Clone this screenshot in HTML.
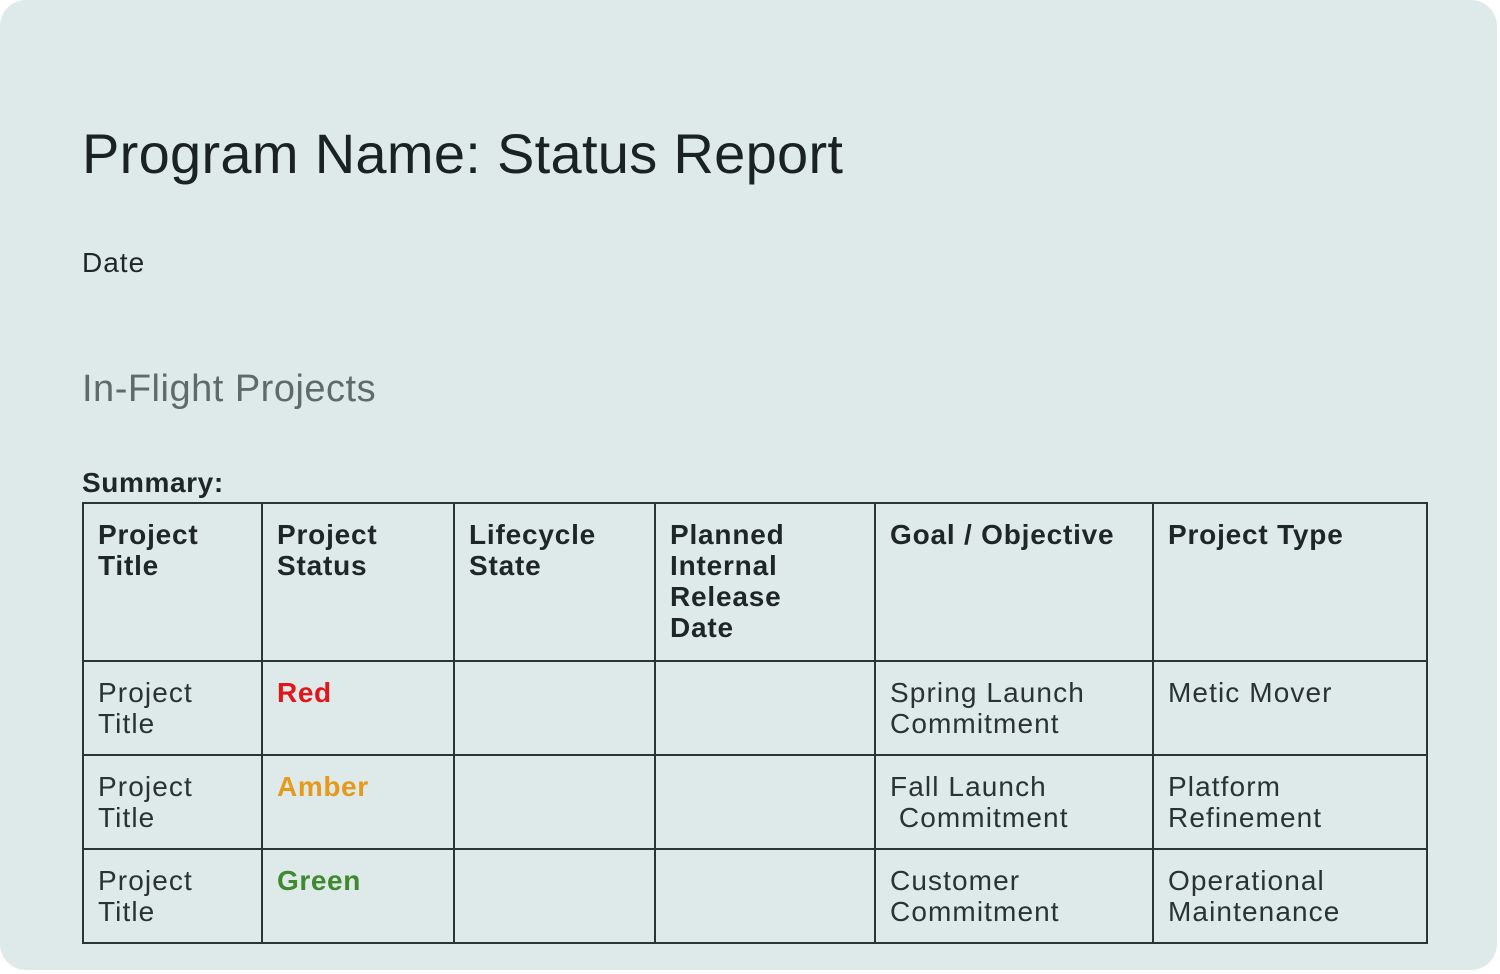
<!DOCTYPE html>
<html><head><style>
html,body{margin:0;padding:0;background:#fff;}
body{width:1500px;height:974px;position:relative;overflow:hidden;font-family:"Liberation Sans",sans-serif;color:#1e2626;}
.card{position:absolute;left:0;top:0;width:1497px;height:970px;background:#deeaea;border-radius:26px;}
.t{position:absolute;left:82px;white-space:nowrap;}
table{position:absolute;left:82px;top:502px;border-collapse:collapse;table-layout:fixed;}
td{border:2px solid #2a3535;vertical-align:top;padding:15px 0 0 14px;font-size:28px;line-height:31px;color:#2a3333;letter-spacing:1.1px;white-space:nowrap;}
tr.h td{font-weight:bold;color:#1e2626;height:141px;letter-spacing:0.8px;}
tr.r td{height:77px;}
</style></head><body>
<div class="card"></div>
<div class="t" style="top:120px;font-size:56px;line-height:68px;color:#1a2222;letter-spacing:0.3px;">Program Name: Status Report</div>
<div class="t" style="top:246px;font-size:28px;line-height:34px;letter-spacing:1px;">Date</div>
<div class="t" style="top:366px;font-size:38px;line-height:46px;color:#5f6b6b;letter-spacing:0.5px;">In-Flight Projects</div>
<div class="t" style="top:466px;font-size:28px;line-height:34px;font-weight:bold;letter-spacing:0.6px;">Summary:</div>
<table>
<colgroup><col style="width:179px"><col style="width:192px"><col style="width:201px"><col style="width:220px"><col style="width:278px"><col style="width:274px"></colgroup>
<tr class="h"><td>Project<br>Title</td><td>Project<br>Status</td><td>Lifecycle<br>State</td><td>Planned<br>Internal<br>Release<br>Date</td><td>Goal / Objective</td><td>Project Type</td></tr>
<tr class="r"><td>Project<br>Title</td><td style="color:#e0161b;font-weight:bold;letter-spacing:0.6px">Red</td><td></td><td></td><td>Spring Launch<br>Commitment</td><td>Metic Mover</td></tr>
<tr class="r"><td>Project<br>Title</td><td style="color:#e69a1c;font-weight:bold;letter-spacing:0.6px">Amber</td><td></td><td></td><td>Fall Launch<br>&nbsp;Commitment</td><td>Platform<br>Refinement</td></tr>
<tr class="r"><td>Project<br>Title</td><td style="color:#3f8a2e;font-weight:bold;letter-spacing:0.6px">Green</td><td></td><td></td><td>Customer<br>Commitment</td><td>Operational<br>Maintenance</td></tr>
</table>
</body></html>
